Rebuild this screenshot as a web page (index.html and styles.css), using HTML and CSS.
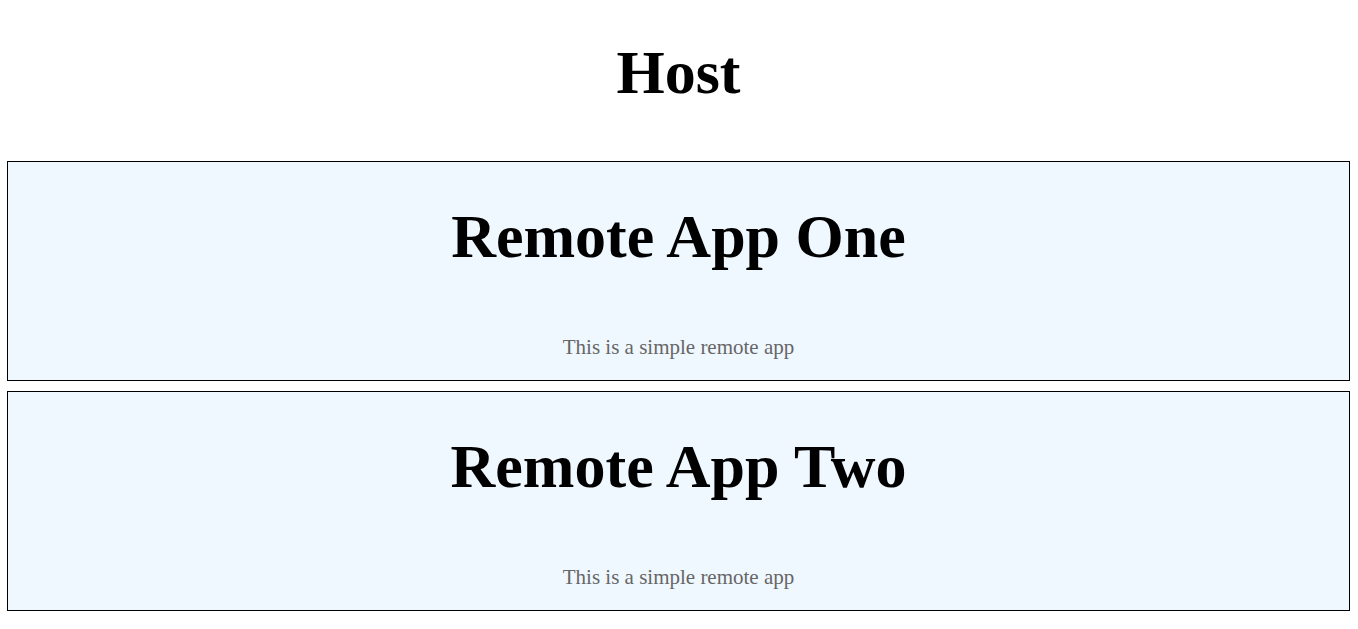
FILE: index.html
```html
<!DOCTYPE html>
<html lang="en">
<head>
    <meta charset="UTF-8">
    <meta name="viewport" content="width=device-width, initial-scale=1.0">
    <title>Host</title>

    <link rel="stylesheet" href="styles.css">
</head>
<body>
    <h1 class="host-title">Host</h1>

    <div class="remote">
        <h1>Remote App One</h1>
        <p>This is a simple remote app</p>
    </div>

    <div class="remote">
        <h1>Remote App Two</h1>
        <p>This is a simple remote app</p>
    </div>
</body>
</html>
```

FILE: styles.css
```css
/* General styling */
body, html {
    margin: 0;
    padding: 0;
}

body {
    padding: 0 8px 0 7px;
    font-family: "Liberation Serif", "Times New Roman", serif;
    color: #000;
    background-color: #fff;
}

h1 {
    font-size: 62px;
    line-height: 70px;
    font-weight: bold;
    text-align: center;
    margin: 0;
}

/* Host heading */
.host-title {
    padding-top: 37px;
    margin-bottom: 54px;
}

/* Remote app card */
.remote {
    background-color: #f0f8ff;
    border: 1px solid #000;
    height: 218px;
    margin-bottom: 10px;
    text-align: center;
}

.remote h1 {
    padding-top: 39px;
}

.remote p {
    margin: 64px 0 0;
    font-size: 21px;
    line-height: 24px;
    color: #666;
}
```
